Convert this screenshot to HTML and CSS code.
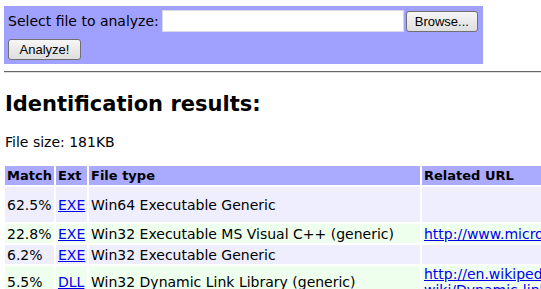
FILE: index.html
```html
<!DOCTYPE html>
<html lang="en">
<head>
    <meta charset="UTF-8">
    <title>File identification</title>
    <link rel="stylesheet" href="styles.css">
</head>
<body>
    <!-- formulario de envio -->
    <form class="upload-box">
        <div class="upload-row">
            <label for="file">Select file to analyze:</label>
            <span class="file-field"></span>
            <button type="button" class="btn btn-browse">Browse...</button>
        </div>
        <div class="upload-row">
            <button type="button" class="btn btn-analyze">Analyze!</button>
        </div>
    </form>

    <hr>

    <h2>Identification results:</h2>
    <p class="file-size">File size: 181KB</p>

    <table class="results">
        <tr>
            <th class="col-match">Match</th>
            <th class="col-ext">Ext</th>
            <th class="col-type">File type</th>
            <th class="col-url">Related URL</th>
        </tr>
        <tr class="odd tall">
            <td>62.5%</td>
            <td><a href="#">EXE</a></td>
            <td>Win64 Executable Generic</td>
            <td></td>
        </tr>
        <tr class="even">
            <td>22.8%</td>
            <td><a href="#">EXE</a></td>
            <td>Win32 Executable MS Visual C++ (generic)</td>
            <td><a href="#">http://www.microsoft.com/</a></td>
        </tr>
        <tr class="odd">
            <td>6.2%</td>
            <td><a href="#">EXE</a></td>
            <td>Win32 Executable Generic</td>
            <td></td>
        </tr>
        <tr class="even">
            <td>5.5%</td>
            <td><a href="#">DLL</a></td>
            <td>Win32 Dynamic Link Library (generic)</td>
            <td><a href="#">http://en.wikipedia.org/<br>wiki/Dynamic-link_library</a></td>
        </tr>
    </table>
</body>
</html>
```

FILE: styles.css
```css
body {
    font-family: "DejaVu Sans", Verdana, sans-serif;
    font-size: 14px;
    color: #000;
    margin: 6px 4px;
    width: 760px;
}

.upload-box {
    background-color: #a0a0ff;
    width: 471px;
    padding: 4px 4px 4px 4px;
    margin: 0;
}

.upload-row {
    display: flex;
    align-items: center;
    height: 22px;
}

.upload-row + .upload-row {
    margin-top: 6px;
}

.upload-row label {
    white-space: nowrap;
    flex-shrink: 0;
    margin-right: 3px;
}

.file-field {
    display: inline-block;
    flex-shrink: 0;
    width: 240px;
    height: 20px;
    background: #fff;
    border: 1px solid #d8d8e8;
    margin-right: 2px;
}

.btn {
    flex-shrink: 0;
    font-family: "Liberation Sans", Arial, sans-serif;
    font-size: 13px;
    height: 21px;
    padding: 0 6px;
    border: 1px solid #707070;
    border-radius: 3px;
    background: linear-gradient(#f6f6f6, #dedede);
    color: #000;
}

.btn-browse {
    width: 72px;
}

.btn-analyze {
    width: 73px;
}

hr {
    margin: 7px 0 0 0;
    border: none;
    border-top: 1px solid #666;
    border-bottom: 1px solid #ddd;
}

h2 {
    font-size: 21px;
    margin: 19px 0 0 1px;
}

.file-size {
    margin: 18px 0 0 1px;
}

.results {
    margin-top: 14px;
    border-spacing: 2px;
    margin-left: -1px;
}

.results th {
    background-color: #aaaaff;
    font-size: 13px;
    text-align: left;
    height: 19px;
    padding: 0 1px 0 2px;
}

.results td {
    padding: 0 1px 0 2px;
    height: 19px;
}

.col-match { width: 46px; }
.col-ext { width: 28px; }
.col-type { width: 328px; }
.col-url { width: 200px; }

.odd td {
    background-color: #eeeeff;
}

.even td {
    background-color: #eeffee;
}

.tall td {
    height: 35px;
}

a {
    color: #0000ee;
}
```
